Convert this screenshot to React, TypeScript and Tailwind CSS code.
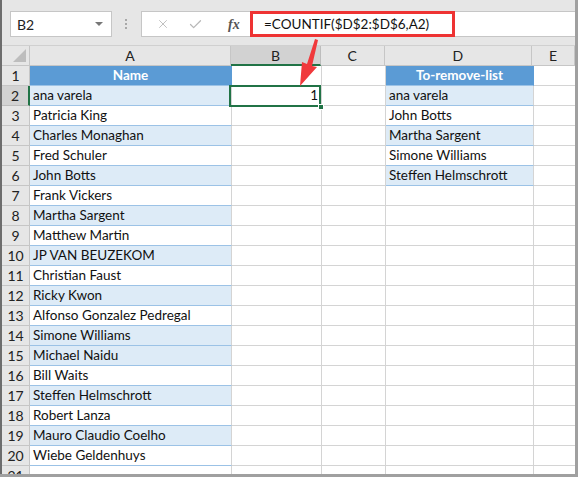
import React from 'react';
import { X, Check } from 'lucide-react';

// Column widths of the sheet: A, B, C, D, E
const COLS = ['A', 'B', 'C', 'D', 'E'];
const COL_W = ['w-[202px]', 'w-[90px]', 'w-[64px]', 'w-[148px]', 'w-[43px]'];

const NAMES = [
  'ana varela',
  'Patricia King',
  'Charles Monaghan',
  'Fred Schuler',
  'John Botts',
  'Frank Vickers',
  'Martha Sargent',
  'Matthew Martin',
  'JP VAN BEUZEKOM',
  'Christian Faust',
  'Ricky Kwon',
  'Alfonso Gonzalez Pedregal',
  'Simone Williams',
  'Michael Naidu',
  'Bill Waits',
  'Steffen Helmschrott',
  'Robert Lanza',
  'Mauro Claudio Coelho',
  'Wiebe Geldenhuys',
];

const REMOVE = ['ana varela', 'John Botts', 'Martha Sargent', 'Simone Williams', 'Steffen Helmschrott'];

// rows of the table that carry the light blue band
const BAND_A = [2, 4, 6, 8, 10, 12, 14, 15, 17, 19];
const bandD = (row: number) => row % 2 === 0;

const Toolbar = () => (
  <div className="flex h-[46px] bg-[#e6e6e6] border-b border-[#d0d0d0]">
    <div className="mt-[11px] ml-[8px] flex h-[26px] w-[102px] items-center justify-between border border-[#c6c6c6] bg-white pl-[6px] pr-[8px]">
      <span className="text-[14px] text-[#222]">B2</span>
      <span className="h-0 w-0 border-x-[4px] border-t-[4px] border-x-transparent border-t-[#777]" />
    </div>
    <div className="ml-[13px] mt-[19px] flex flex-col gap-[2px]">
      <span className="h-[2px] w-[2px] bg-[#a8a8a8]" />
      <span className="h-[2px] w-[2px] bg-[#a8a8a8]" />
      <span className="h-[2px] w-[2px] bg-[#a8a8a8]" />
    </div>
    <div className="mt-[11px] ml-[14px] flex h-[26px] flex-1 border-y border-l border-[#c6c6c6] bg-white">
      <div className="flex w-[108px] items-center">
        <X className="ml-[14px] h-[14px] w-[14px] text-[#b8b8b8]" strokeWidth={1.5} />
        <Check className="ml-[18px] h-[15px] w-[15px] text-[#b8b8b8]" strokeWidth={2} />
        <span className="ml-[25px] font-['Liberation_Serif'] text-[14px] font-bold italic text-[#555]">fx</span>
      </div>
      <div className="-mt-px flex h-[26px] w-[205px] items-center border-[3px] border-[#ee3333] pl-[11px] text-[13.5px] text-[#111]">
        =COUNTIF($D$2:$D$6,A2)
      </div>
    </div>
  </div>
);

const HeaderRow = () => (
  <div className="flex h-[20px]">
    <div className="flex w-[28px] items-end justify-end border-r border-b border-[#c6c6c6] bg-[#e6e6e6] p-[3px]">
      <svg width="13" height="13" viewBox="0 0 13 13">
        <path d="M13 0 L13 13 L0 13 Z" fill="#bdbdbd" />
      </svg>
    </div>
    {COLS.map((c, i) => (
      <div
        key={c}
        className={`${COL_W[i]} flex items-center justify-center border-r text-[14px] text-[#222] ${
          c === 'B'
            ? 'border-b-2 border-r-[#bdbdbd] border-b-[#217346] bg-[#d2d2d2]'
            : 'border-b border-[#c6c6c6] bg-[#e6e6e6]'
        }`}
      >
        {c}
      </div>
    ))}
  </div>
);

const Cell = ({ w, className = '', children }: { w: string; className?: string; children?: React.ReactNode }) => (
  <div className={`${w} flex shrink-0 items-center overflow-hidden whitespace-nowrap border-r border-b text-[13.5px] text-[#111] ${className}`}>
    {children}
  </div>
);

const Row = ({ row }: { row: number }) => {
  const a = row === 1 ? 'Name' : NAMES[row - 2] ?? '';
  const d = row === 1 ? 'To-remove-list' : REMOVE[row - 2] ?? '';
  const inA = row <= 20;
  const inD = row <= 6;

  const head = 'justify-center bg-[#5b9bd5] font-bold text-white border-[#5b9bd5] border-b-[#9bc2e6]';
  const aCls =
    row === 1
      ? head
      : inA
        ? `pl-[3px] border-r-[#d4d4d4] border-b-[#9bc2e6] ${BAND_A.includes(row) ? 'bg-[#ddebf7]' : 'bg-white'}`
        : 'border-[#d4d4d4]';
  const dCls =
    row === 1
      ? head
      : inD
        ? `pl-[3px] border-r-[#d4d4d4] border-b-[#9bc2e6] ${bandD(row) ? 'bg-[#ddebf7]' : 'bg-white'}`
        : 'border-[#d4d4d4]';

  return (
    <div className="flex h-[20px] shrink-0">
      <div
        className={`flex w-[28px] shrink-0 items-center justify-center border-b text-[14px] text-[#222] ${
          row === 2
            ? 'border-r-2 border-r-[#217346] border-b-[#bdbdbd] bg-[#d2d2d2]'
            : 'border-r border-[#c6c6c6] bg-[#e6e6e6]'
        }`}
      >
        {row}
      </div>
      <Cell w={COL_W[0]} className={aCls}>{a}</Cell>
      <Cell w={COL_W[1]} className="justify-end border-[#d4d4d4] bg-white pr-[3px]">{row === 2 ? '1' : ''}</Cell>
      <Cell w={COL_W[2]} className="border-[#d4d4d4] bg-white" />
      <Cell w={COL_W[3]} className={dCls}>{d}</Cell>
      <Cell w={COL_W[4]} className="border-[#d4d4d4] bg-white" />
    </div>
  );
};

export default function App() {
  const rows = Array.from({ length: 21 }, (_, i) => i + 1);
  return (
    <div className="relative h-[477px] w-[578px] overflow-hidden bg-[#a0a0a0] font-['Lato','Liberation_Sans',sans-serif]">
      <div className="h-[474px] w-[575px] overflow-hidden border-l-2 border-[#6d6d6d] bg-white">
        <Toolbar />
        <HeaderRow />
        <div className="flex flex-col">
          {rows.map((r) => (
            <Row key={r} row={r} />
          ))}
        </div>
      </div>

      {/* selection box on B2 with fill handle */}
      <div className="pointer-events-none absolute left-[229px] top-[85px] h-[22px] w-[92px] border-2 border-[#217346]" />
      <div className="absolute left-[318px] top-[104px] h-[6px] w-[6px] border border-white bg-[#217346]" />

      {/* red callout arrow */}
      <svg className="absolute left-[290px] top-[36px]" width="40" height="54" viewBox="0 0 40 54">
        <path d="M28 4 L22 30 L27 31 L10 50 L12 26 L17 28 L25 3 Z" fill="#f0393c" />
      </svg>
    </div>
  );
}
